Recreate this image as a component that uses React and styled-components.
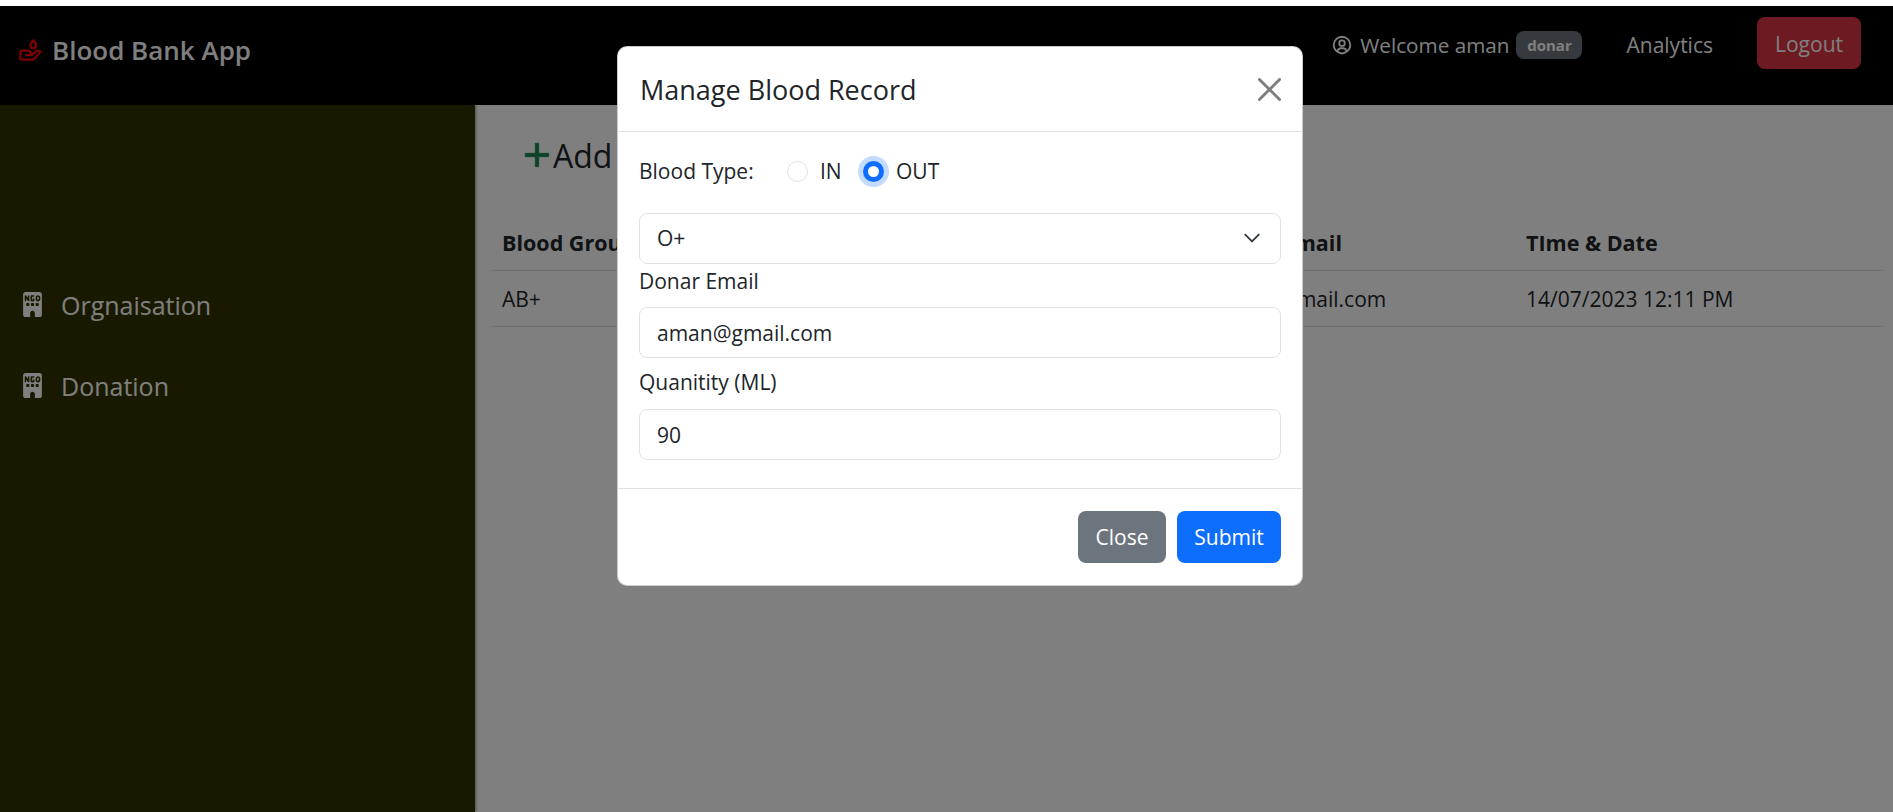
import React from "react";
import styled, { createGlobalStyle } from "styled-components";
import { BiDonateBlood, BiUserCircle, BiPlus } from "react-icons/bi";
import { FaBuildingNgo } from "react-icons/fa6";

const FONT = `"Open Sans", "Noto Sans", sans-serif`;

const GlobalStyle = createGlobalStyle`
  html, body {
    margin: 0;
    height: 100%;
    overflow: hidden;
    background: #fff;
  }
  * {
    box-sizing: border-box;
  }
  body {
    font-family: ${FONT};
    font-size: 21px;
    color: #212529;
  }
`;

const Page = styled.div`
  position: relative;
  height: 812px;
  padding-top: 6px;
  display: flex;
  flex-direction: column;
`;

const Navbar = styled.nav`
  height: 99px;
  flex: none;
  background: #000;
  display: flex;
  justify-content: space-between;
  align-items: flex-start;
  padding: 11px 32px 0 17px;
`;

const Brand = styled.div`
  display: flex;
  align-items: center;
  gap: 8px;
  margin-top: 15px;
  font-size: 26px;
  font-weight: 600;
  color: #fff;
  svg {
    color: red;
  }
`;

const NavRight = styled.div`
  display: flex;
  align-items: center;
  height: 52px;
  color: #fff;
`;

const Welcome = styled.div`
  display: flex;
  align-items: center;
  gap: 7px;
  padding-top: 3px;
  font-size: 20.7px;
`;

const Badge = styled.span`
  display: inline-block;
  width: 66px;
  height: 28px;
  line-height: 28px;
  text-align: center;
  border-radius: 8px;
  background: #6c757d;
  color: #fff;
  font-size: 15px;
  font-weight: 700;
`;

const NavLink = styled.a`
  margin-left: 44px;
  padding-top: 3px;
  color: #fff;
`;

const LogoutButton = styled.button`
  width: 104px;
  height: 52px;
  margin-left: 44px;
  padding: 2px 0 0;
  border: none;
  border-radius: 8px;
  background: #dc3545;
  color: #fff;
  font: inherit;
`;

const Body = styled.div`
  flex: 1;
  display: flex;
  min-height: 0;
`;

const Sidebar = styled.aside`
  width: 475px;
  flex: none;
  padding-top: 159px;
  background: #333300;
  box-shadow: 1px 0 3px rgba(0, 0, 0, 0.4);
`;

const MenuItem = styled.div`
  height: 81px;
  display: flex;
  align-items: center;
  gap: 16px;
  padding-left: 20px;
  font-size: 25px;
  color: #fff;
`;

const Main = styled.main`
  flex: 1;
  min-width: 0;
  padding: 30px 10px 0 16px;
`;

const AddTitle = styled.h4`
  display: flex;
  align-items: center;
  margin: 0 0 40px 26px;
  height: 40px;
  font-size: 32px;
  font-weight: 500;
  svg {
    flex: none;
    color: #198754;
    margin-right: -4px;
    stroke: currentColor;
    stroke-width: 0.5px;
  }
`;

const Table = styled.table`
  width: 100%;
  table-layout: fixed;
  border-collapse: collapse;
`;

const Th = styled.th`
  width: ${(p) => p.$w}px;
  height: 55px;
  padding: 1px 11px 0;
  text-align: left;
  font-size: 21.5px;
  font-weight: 700;
  border-bottom: 1px solid #dee2e6;
  white-space: nowrap;
`;

const Td = styled.td`
  height: 56px;
  padding: 2px 11px 0;
  border-bottom: 1px solid #dee2e6;
  white-space: nowrap;
`;

const Overlay = styled.div`
  position: absolute;
  top: 6px;
  left: 0;
  right: 0;
  bottom: 0;
  padding: 40px 0 0 617px;
  background: rgba(0, 0, 0, 0.5);
`;

const Modal = styled.div`
  width: 686px;
  height: 540px;
  display: flex;
  flex-direction: column;
  background: #fff;
  border: 1px solid rgba(0, 0, 0, 0.2);
  border-radius: 10px;
`;

const ModalHeader = styled.div`
  height: 85px;
  flex: none;
  display: flex;
  align-items: center;
  justify-content: space-between;
  padding: 0 21px 0 22px;
  border-bottom: 1px solid #dee2e6;
`;

const ModalTitle = styled.h5`
  margin: 0;
  font-size: 27px;
  font-weight: 500;
`;

const CloseX = styled.button`
  display: flex;
  padding: 0;
  border: none;
  background: none;
  color: #000;
  opacity: 0.5;
`;

const ModalBody = styled.div`
  flex: 1;
  padding: 0 21px;
`;

const RadioRow = styled.div`
  height: 81px;
  padding-bottom: 3px;
  display: flex;
  align-items: center;
`;

const RadioLabel = styled.span`
  width: ${(p) => p.$w}px;
`;

const Radio = styled.span`
  width: 21px;
  height: 21px;
  flex: none;
  border-radius: 50%;
  margin-right: ${(p) => p.$gap}px;
  background: #fff;
  border: ${(p) => (p.$on ? "5px solid #0d6efd" : "1px solid #dee2e6")};
  box-shadow: ${(p) => (p.$on ? "0 0 0 5px rgba(13, 110, 253, 0.25)" : "none")};
`;

const FieldLabel = styled.label`
  display: block;
  margin-top: ${(p) => p.$top}px;
  margin-bottom: ${(p) => p.$bottom}px;
  line-height: 30px;
`;

const controlStyles = `
  display: block;
  width: 100%;
  height: 51px;
  padding: 0 17px;
  border: 1px solid #dee2e6;
  border-radius: 8px;
  background: #fff;
  color: #212529;
  font-family: ${FONT};
  font-size: 21px;
  outline: none;
`;

const Input = styled.input`
  ${controlStyles}
`;

const SelectWrap = styled.div`
  position: relative;
`;

const Select = styled.select`
  ${controlStyles}
  padding-bottom: 2px;
  appearance: none;
`;

const Chevron = styled.svg`
  position: absolute;
  top: 16px;
  right: 20px;
  pointer-events: none;
`;

const ModalFooter = styled.div`
  height: 97px;
  flex: none;
  display: flex;
  justify-content: flex-end;
  gap: 11px;
  padding: 22px 21px 0;
  border-top: 1px solid #dee2e6;
`;

const Button = styled.button`
  width: ${(p) => p.$w}px;
  height: 52px;
  border: none;
  border-radius: 8px;
  background: ${(p) => p.$bg};
  color: #fff;
  font: inherit;
`;

const columns = [
  ["Blood Group", "AB+", 235],
  ["Inventory Type", "OUT", 237],
  ["Quantity", "90 (ML)", 237],
  ["Donar Email", "aman@gmail.com", 315],
  ["TIme & Date", "14/07/2023 12:11 PM", 368],
];

export default function App() {
  return (
    <Page>
      <GlobalStyle />
      <Navbar>
        <Brand>
          <BiDonateBlood size={27} />
          Blood Bank App
        </Brand>
        <NavRight>
          <Welcome>
            <BiUserCircle size={22} />
            <span>Welcome aman</span>
            <Badge>donar</Badge>
          </Welcome>
          <NavLink>Analytics</NavLink>
          <LogoutButton>Logout</LogoutButton>
        </NavRight>
      </Navbar>
      <Body>
        <Sidebar>
          <MenuItem>
            <FaBuildingNgo size={25} />
            Orgnaisation
          </MenuItem>
          <MenuItem>
            <FaBuildingNgo size={25} />
            Donation
          </MenuItem>
        </Sidebar>
        <Main>
          <AddTitle>
            <BiPlus size={40} />
            Add Inventory
          </AddTitle>
          <Table>
            <thead>
              <tr>
                {columns.map(([head, , w]) => (
                  <Th key={head} $w={w}>
                    {head}
                  </Th>
                ))}
              </tr>
            </thead>
            <tbody>
              <tr>
                {columns.map(([head, cell]) => (
                  <Td key={head}>{cell}</Td>
                ))}
              </tr>
            </tbody>
          </Table>
        </Main>
      </Body>
      <Overlay>
        <Modal>
          <ModalHeader>
            <ModalTitle>Manage Blood Record</ModalTitle>
            <CloseX aria-label="Close">
              <svg width="23" height="23" viewBox="0 0 16 16" fill="currentColor">
                <path d="M.293.293a1 1 0 0 1 1.414 0L8 6.586 14.293.293a1 1 0 1 1 1.414 1.414L9.414 8l6.293 6.293a1 1 0 0 1-1.414 1.414L8 9.414l-6.293 6.293a1 1 0 0 1-1.414-1.414L6.586 8 .293 1.707a1 1 0 0 1 0-1.414z" />
              </svg>
            </CloseX>
          </ModalHeader>
          <ModalBody>
            <RadioRow>
              <RadioLabel $w={148}>Blood Type:</RadioLabel>
              <Radio $gap={12} />
              <RadioLabel $w={43}>IN</RadioLabel>
              <Radio $on $gap={12} />
              <RadioLabel $w={50}>OUT</RadioLabel>
            </RadioRow>
            <SelectWrap>
              <Select defaultValue="O+">
                <option>O+</option>
                <option>O-</option>
                <option>AB+</option>
                <option>AB-</option>
              </Select>
              <Chevron width="18" height="18" viewBox="0 0 16 16" fill="none" stroke="#343a40" strokeWidth="1.7" strokeLinecap="round" strokeLinejoin="round">
                <path d="m2 5 6 6 6-6" />
              </Chevron>
            </SelectWrap>
            <FieldLabel $top={2} $bottom={11}>Donar Email</FieldLabel>
            <Input defaultValue="aman@gmail.com" />
            <FieldLabel $top={9} $bottom={12}>Quanitity (ML)</FieldLabel>
            <Input defaultValue="90" />
          </ModalBody>
          <ModalFooter>
            <Button $w={88} $bg="#6c757d">Close</Button>
            <Button $w={104} $bg="#0d6efd">Submit</Button>
          </ModalFooter>
        </Modal>
      </Overlay>
    </Page>
  );
}
